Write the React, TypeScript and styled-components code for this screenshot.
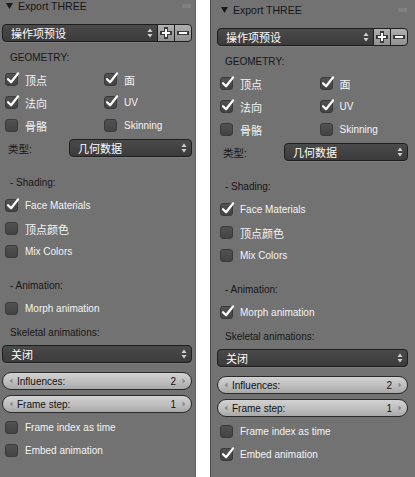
import styled, { createGlobalStyle } from 'styled-components'

const GlobalStyle = createGlobalStyle`
  html, body {
    margin: 0;
    padding: 0;
    background: #ffffff;
  }
  body {
    font-family: "Liberation Sans", "Noto Sans CJK SC", sans-serif;
    font-size: 10px;
  }
`

type Check = { label: string; on: boolean; cjk?: boolean }

const geometry: Check[] = [
  { label: '顶点', on: true, cjk: true },
  { label: '面', on: true, cjk: true },
  { label: '法向', on: true, cjk: true },
  { label: 'UV', on: true },
  { label: '骨骼', on: false, cjk: true },
  { label: 'Skinning', on: false },
]

const shading: Check[] = [
  { label: 'Face Materials', on: true },
  { label: '顶点颜色', on: false, cjk: true },
  { label: 'Mix Colors', on: false },
]

function UpDown() {
  return (
    <Arrows viewBox="0 0 6 10">
      <path d="M3 0.5 L5.5 4 L0.5 4 Z" fill="#d0d0d0" />
      <path d="M3 9.5 L5.5 6 L0.5 6 Z" fill="#d0d0d0" />
    </Arrows>
  )
}

function CheckBox({ on }: { on: boolean }) {
  return (
    <Box>
      {on && (
        <CheckMark viewBox="0 0 12 12">
          <path d="M2.6 6.2 L5.2 8.8 L11.2 1.2" stroke="#ffffff" strokeWidth="2" fill="none" strokeLinecap="round" strokeLinejoin="round" />
        </CheckMark>
      )}
    </Box>
  )
}

function CheckItem({ item }: { item: Check }) {
  return (
    <CheckRow>
      <CheckBox on={item.on} />
      <CheckLabel $cjk={!!item.cjk}>{item.label}</CheckLabel>
    </CheckRow>
  )
}

function NumField({ label, value }: { label: string; value: number }) {
  return (
    <Slider>
      <SmallArrow viewBox="0 0 4 6">
        <path d="M3.5 0.5 L0.5 3 L3.5 5.5 Z" fill="#8a8a8a" />
      </SmallArrow>
      <SliderLabel>{label}</SliderLabel>
      <SliderValue>{value}</SliderValue>
      <SmallArrow viewBox="0 0 4 6">
        <path d="M0.5 0.5 L3.5 3 L0.5 5.5 Z" fill="#8a8a8a" />
      </SmallArrow>
    </Slider>
  )
}

function ExportPanel({ side, morph, embed }: { side: 'left' | 'right'; morph: boolean; embed: boolean }) {
  return (
    <Panel $side={side}>
      <Header>
        <svg width="7" height="6" viewBox="0 0 7 6">
          <path d="M0 0 L7 0 L3.5 6 Z" fill="#1a1a1a" />
        </svg>
        <HeaderTitle>Export THREE</HeaderTitle>
        <Grip />
      </Header>

      <PresetRow>
        <MenuButton $attached $grow>
          <MenuText>操作项预设</MenuText>
          <UpDown />
        </MenuButton>
        <ToolButton>
          <svg width="12" height="12" viewBox="0 0 12 12">
            <path d="M6 1.5 V10.5 M1.5 6 H10.5" stroke="#3a3a3a" strokeWidth="4" strokeLinecap="square" />
            <path d="M6 2 V10 M2 6 H10" stroke="#ffffff" strokeWidth="2" />
          </svg>
        </ToolButton>
        <ToolButton $last>
          <svg width="12" height="12" viewBox="0 0 12 12">
            <path d="M1.5 6 H10.5" stroke="#3a3a3a" strokeWidth="4" strokeLinecap="square" />
            <path d="M2 6 H10" stroke="#ffffff" strokeWidth="2" />
          </svg>
        </ToolButton>
      </PresetRow>

      <SectionLabel $top={4}>GEOMETRY:</SectionLabel>
      <CheckGrid>
        {geometry.map((item) => (
          <CheckItem key={item.label} item={item} />
        ))}
      </CheckGrid>

      <TypeRow>
        <TypeLabel>类型:</TypeLabel>
        <MenuButton>
          <MenuText>几何数据</MenuText>
          <UpDown />
        </MenuButton>
      </TypeRow>

      <SectionLabel $top={14}>- Shading:</SectionLabel>
      <CheckList>
        {shading.map((item) => (
          <CheckItem key={item.label} item={item} />
        ))}
      </CheckList>

      <SectionLabel $top={11}>- Animation:</SectionLabel>
      <CheckList>
        <CheckItem item={{ label: 'Morph animation', on: morph }} />
      </CheckList>
      <SectionLabel $top={1}>Skeletal animations:</SectionLabel>

      <MenuButton $top={2}>
        <MenuText>关闭</MenuText>
        <UpDown />
      </MenuButton>

      <Sliders>
        <NumField label="Influences:" value={2} />
        <NumField label="Frame step:" value={1} />
      </Sliders>

      <CheckList $top={3}>
        <CheckItem item={{ label: 'Frame index as time', on: false }} />
        <CheckItem item={{ label: 'Embed animation', on: embed }} />
      </CheckList>
    </Panel>
  )
}

export default function App() {
  return (
    <>
      <GlobalStyle />
      <Page>
        <ExportPanel side="left" morph={false} embed={false} />
        <ExportPanel side="right" morph={true} embed={true} />
      </Page>
    </>
  )
}

const Page = styled.div`
  width: 415px;
  height: 477px;
  display: flex;
  justify-content: space-between;
  background: #ffffff;
  overflow: hidden;
`

const Panel = styled.div<{ $side: 'left' | 'right' }>`
  box-sizing: border-box;
  height: 477px;
  width: ${(p) => (p.$side === 'left' ? '196px' : '205px')};
  padding: ${(p) => (p.$side === 'left' ? '0 3px 0 2px' : '4px 7px 0 6px')};
  background: #727272;
  border-right: ${(p) => (p.$side === 'left' ? '1px solid #5f5f5f' : 'none')};
  border-left: ${(p) => (p.$side === 'right' ? '1px solid #4e4e4e' : 'none')};
  display: flex;
  flex-direction: column;

  & > * {
    flex-shrink: 0;
  }
`

const Header = styled.div`
  height: 11px;
  display: flex;
  align-items: center;
  gap: 5px;
  padding-left: 4px;
`

const HeaderTitle = styled.span`
  font-size: 10.5px;
  color: #161616;
`

const Grip = styled.div`
  margin-left: auto;
  margin-right: 1px;
  width: 9px;
  height: 4px;
  background-image: radial-gradient(circle, rgba(190, 190, 190, 0.55) 0.5px, transparent 0.8px);
  background-size: 2px 2px;
`

const PresetRow = styled.div`
  margin-top: 13px;
  height: 18px;
  display: flex;
`

const MenuButton = styled.div<{ $attached?: boolean; $top?: number; $grow?: boolean }>`
  box-sizing: border-box;
  flex: ${(p) => (p.$grow ? '1 1 auto' : '0 0 auto')};
  height: 18px;
  margin-top: ${(p) => p.$top ?? 0}px;
  display: flex;
  align-items: center;
  padding: 0 4px 0 8px;
  background: linear-gradient(#4a4a4a, #3b3b3b);
  border: 1px solid #1e1e1e;
  border-radius: ${(p) => (p.$attached ? '4px 0 0 4px' : '4px')};
  box-shadow: 0 1px 0 rgba(255, 255, 255, 0.08);
`

const MenuText = styled.span`
  flex: 1;
  color: #ffffff;
  font-size: 11px;
`

const Arrows = styled.svg`
  width: 6px;
  height: 10px;
`

const ToolButton = styled.div<{ $last?: boolean }>`
  box-sizing: border-box;
  width: 18px;
  height: 18px;
  margin-left: -1px;
  display: flex;
  align-items: center;
  justify-content: center;
  background: linear-gradient(#b0b0b0, #909090);
  border: 1px solid #1e1e1e;
  border-radius: ${(p) => (p.$last ? '0 4px 4px 0' : '0')};
`

const SectionLabel = styled.div<{ $top: number }>`
  height: 22px;
  margin-top: ${(p) => p.$top}px;
  display: flex;
  align-items: center;
  padding-left: 8px;
  color: #171717;
`

const CheckGrid = styled.div`
  display: grid;
  grid-template-columns: 1fr 1fr;
  column-gap: 8px;
`

const CheckList = styled.div<{ $top?: number }>`
  display: flex;
  flex-direction: column;
  margin-top: ${(p) => p.$top ?? 1}px;
`

const CheckRow = styled.div`
  height: 23px;
  display: flex;
  align-items: center;
  gap: 7px;
  padding-left: 3px;
`

const Box = styled.div`
  position: relative;
  box-sizing: border-box;
  width: 13px;
  height: 13px;
  flex-shrink: 0;
  background: linear-gradient(#525252, #434343);
  border: 1px solid #3a3a3a;
  border-radius: 3px;
`

const CheckMark = styled.svg`
  position: absolute;
  left: -1px;
  top: -2px;
  width: 14px;
  height: 14px;
  overflow: visible;
`

const CheckLabel = styled.span<{ $cjk: boolean }>`
  color: #f4f4f4;
  font-size: ${(p) => (p.$cjk ? '11px' : '10px')};
  white-space: nowrap;
`

const TypeRow = styled.div`
  margin-top: 2px;
  height: 18px;
  display: grid;
  grid-template-columns: 67px 1fr;
  align-items: center;
`

const TypeLabel = styled.span`
  padding-left: 6px;
  font-size: 10.5px;
  color: #171717;
`

const Sliders = styled.div`
  margin-top: 9px;
  display: flex;
  flex-direction: column;
  gap: 5px;
`

const Slider = styled.div`
  box-sizing: border-box;
  height: 18px;
  display: flex;
  align-items: center;
  padding: 0 5px 0 6px;
  gap: 4px;
  background: linear-gradient(#d2d2d2, #bcbcbc 60%, #a8a8a8);
  border: 1px solid #2a2a2a;
  border-radius: 9px;
  color: #111111;
`

const SmallArrow = styled.svg`
  width: 4px;
  height: 6px;
  flex-shrink: 0;
`

const SliderLabel = styled.span`
  flex: 1;
`

const SliderValue = styled.span`
  margin-right: 2px;
`
